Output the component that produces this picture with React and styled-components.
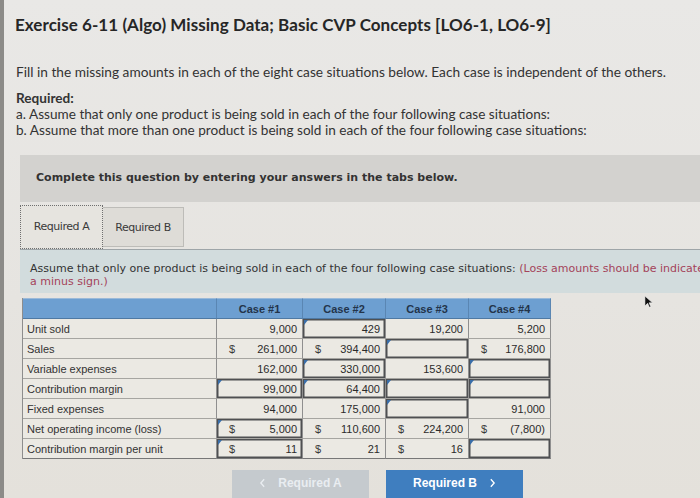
import React from "react";
import styled, { createGlobalStyle } from "styled-components";

const GlobalStyle = createGlobalStyle`
  html, body {
    margin: 0;
    padding: 0;
    background: #e7e5e1;
    overflow: hidden;
  }
`;

const rows = [
  { label: "Unit sold", cells: [["9,000"], ["429", 0, 1], ["19,200"], ["5,200"]] },
  { label: "Sales", cells: [["261,000", 1], ["394,400", 1], ["", 0, 1], ["176,800", 1]] },
  { label: "Variable expenses", cells: [["162,000"], ["330,000", 0, 1], ["153,600"], ["", 0, 1]] },
  { label: "Contribution margin", cells: [["99,000", 0, 1], ["64,400", 0, 1], ["", 0, 1], ["", 0, 1]] },
  { label: "Fixed expenses", cells: [["94,000"], ["175,000"], ["", 0, 1], ["91,000"]] },
  { label: "Net operating income (loss)", cells: [["5,000", 1, 1], ["110,600", 1], ["224,200", 1], ["(7,800)", 1]] },
  { label: "Contribution margin per unit", cells: [["11", 1, 1], ["21", 1], ["16", 1], ["", 0, 1]] },
];

const App = () => {
  return (
    <Page>
      <GlobalStyle />
      <Title>Exercise 6-11 (Algo) Missing Data; Basic CVP Concepts [LO6-1, LO6-9]</Title>
      <Intro>
        Fill in the missing amounts in each of the eight case situations below. Each case is independent of the others.
      </Intro>
      <Required>
        <strong>Required:</strong>
        <span>a. Assume that only one product is being sold in each of the four following case situations:</span>
        <span>b. Assume that more than one product is being sold in each of the four following case situations:</span>
      </Required>

      <Prompt>Complete this question by entering your answers in the tabs below.</Prompt>

      <Tabs>
        <Tab $active>Required A</Tab>
        <Tab>Required B</Tab>
      </Tabs>

      <Instruction>
        <span>
          Assume that only one product is being sold in each of the four following case situations:{" "}
          <Warn>(Loss amounts should be indicated by</Warn>
        </span>
        <Warn>a minus sign.)</Warn>
      </Instruction>

      <Grid>
        <HeadCell />
        {["Case #1", "Case #2", "Case #3", "Case #4"].map((h) => (
          <HeadCell key={h}>{h}</HeadCell>
        ))}
        {rows.map((r, i) => (
          <React.Fragment key={r.label}>
            <LabelCell $last={i === rows.length - 1}>{r.label}</LabelCell>
            {r.cells.map(([v, dollar, input], j) => (
              <ValueCell key={j} $input={!!input} $last={i === rows.length - 1}>
                <Dollar>{dollar ? "$" : ""}</Dollar>
                <span>{v}</span>
              </ValueCell>
            ))}
          </React.Fragment>
        ))}
      </Grid>

      <Nav>
        <NavButton $disabled>
          <Chevron viewBox="0 0 8 12">
            <path d="M6 1.5L2 6l4 4.5" />
          </Chevron>
          Required A
        </NavButton>
        <NavButton>
          Required B
          <Chevron viewBox="0 0 8 12">
            <path d="M2 1.5L6 6l-4 4.5" />
          </Chevron>
        </NavButton>
      </Nav>

      <Cursor viewBox="0 0 10 14">
        <path d="M1 1v11l3-3 2 4.5 1.6-.7-2-4.3H9.5z" fill="#111" stroke="#fff" strokeWidth="0.6" />
      </Cursor>
    </Page>
  );
};

export default App;

const Page = styled.div`
  position: relative;
  width: 700px;
  height: 498px;
  box-sizing: border-box;
  border-left: 4px solid #8c8b88;
  padding: 14px 0 0 11px;
  overflow: hidden;
  color: #2a2a2a;
  background: linear-gradient(180deg, #e9e8e6 0%, #e6e4e0 60%, #e4e1db 100%);
`;

const Title = styled.h1`
  margin: 0;
  font-family: Lato, "Open Sans", sans-serif;
  font-size: 17px;
  line-height: 22px;
  font-weight: 700;
  color: #262626;
  letter-spacing: 0.05px;
`;

const Intro = styled.p`
  margin: 27px 0 0 1px;
  font-family: Lato, "Open Sans", sans-serif;
  font-size: 13.7px;
  line-height: 17px;
  color: #333;
`;

const Required = styled.div`
  margin: 10px 0 0 1px;
  display: flex;
  flex-direction: column;
  font-family: Lato, "Open Sans", sans-serif;
  font-size: 13.6px;
  line-height: 16px;
  color: #333;

  strong {
    font-weight: 700;
  }
`;

const Prompt = styled.div`
  margin: 17px 0 0 5px;
  height: 47px;
  display: flex;
  align-items: center;
  padding: 0 0 2px 16px;
  box-sizing: border-box;
  width: 720px;
  background: #d3d2cf;
  font-family: "DejaVu Sans", Verdana, sans-serif;
  font-size: 11px;
  font-weight: 700;
  color: #333;
`;

const Tabs = styled.div`
  display: flex;
  align-items: flex-end;
  margin: 3px 0 0 5px;
  height: 44px;
`;

const Tab = styled.div`
  box-sizing: border-box;
  height: ${(p) => (p.$active ? "44px" : "40px")};
  margin-bottom: ${(p) => (p.$active ? "0" : "2px")};
  width: ${(p) => (p.$active ? "83px" : "81px")};
  display: flex;
  align-items: center;
  justify-content: center;
  padding-bottom: ${(p) => (p.$active ? "2px" : "0")};
  border: ${(p) => (p.$active ? "1px dotted #6f6f6f" : "1px solid #bdbcb8")};
  border-left: ${(p) => (p.$active ? "1px dotted #6f6f6f" : "none")};
  background: ${(p) => (p.$active ? "#e6e4df" : "#dedcd7")};
  font-family: "DejaVu Sans", Verdana, sans-serif;
  font-size: 11px;
  letter-spacing: -0.45px;
  color: #3a3a3a;
`;

const Instruction = styled.div`
  margin-left: 5px;
  width: 760px;
  height: 44px;
  box-sizing: border-box;
  border-top: 1px solid #9ea5a8;
  background: #d2dcdd;
  padding: 12px 0 0 10px;
  display: flex;
  flex-direction: column;
  font-family: "DejaVu Sans", Verdana, sans-serif;
  font-size: 11px;
  line-height: 13px;
  color: #333;
  white-space: nowrap;
`;

const Warn = styled.span`
  color: #a4435a;
`;

const Grid = styled.div`
  margin: 5px 0 0 7px;
  display: grid;
  grid-template-columns: 194px 86px 83px 83px 82px;
  grid-template-rows: 21px repeat(7, 20px);
  width: 528px;
  border-left: 1px solid #8d8d8d;
  font-family: "Liberation Sans", Arial, sans-serif;
  font-size: 11px;
`;

const HeadCell = styled.div`
  background: #6d9fd1;
  border-right: 1px solid #5a86b3;
  border-bottom: 1px solid #4f79a3;
  border-top: 1px solid #9bb9d8;
  display: flex;
  align-items: center;
  justify-content: center;
  font-weight: 700;
  color: #23344a;
  padding-top: 1px;
  box-sizing: border-box;
`;

const LabelCell = styled.div`
  box-sizing: border-box;
  background: #ebe9e3;
  border-bottom: 1px solid ${(p) => (p.$last ? "#777" : "#a6a5a1")};
  border-right: 1px solid #8f8f8f;
  display: flex;
  align-items: center;
  padding-left: 4px;
  color: #333;
`;

const ValueCell = styled.div`
  position: relative;
  box-sizing: border-box;
  background: #ebe9e3;
  border-bottom: 1px solid ${(p) => (p.$last ? "#777" : "#a6a5a1")};
  border-right: 1px solid #8f8f8f;
  display: flex;
  align-items: center;
  justify-content: space-between;
  padding: 0 5px 0 12px;
  color: #2b2b2b;
  box-shadow: ${(p) => (p.$input ? "inset 0 0 0 1.5px #4f5052" : "none")};

  &::before {
    content: "";
    display: ${(p) => (p.$input ? "block" : "none")};
    position: absolute;
    left: 1px;
    top: 1px;
    border-top: 5px solid #3a6ea8;
    border-right: 4px solid transparent;
  }
`;

const Dollar = styled.span`
  color: #3a3a3a;
`;

const Nav = styled.div`
  display: flex;
  gap: 17px;
  margin: 11px 0 0 217px;
`;

const NavButton = styled.div`
  width: 137px;
  height: 34px;
  box-sizing: border-box;
  padding-bottom: 8px;
  display: flex;
  align-items: center;
  justify-content: center;
  gap: 12px;
  background: ${(p) => (p.$disabled ? "#c5cace" : "#3f7ebf")};
  color: ${(p) => (p.$disabled ? "#e9edf1" : "#fff")};
  font-family: "Liberation Sans", Arial, sans-serif;
  font-size: 12px;
  font-weight: 700;
`;

const Chevron = styled.svg`
  width: 7px;
  height: 10px;
  fill: none;
  stroke: currentColor;
  stroke-width: 1.6;
`;

const Cursor = styled.svg`
  position: absolute;
  left: 640px;
  top: 295px;
  width: 9px;
  height: 13px;
`;
